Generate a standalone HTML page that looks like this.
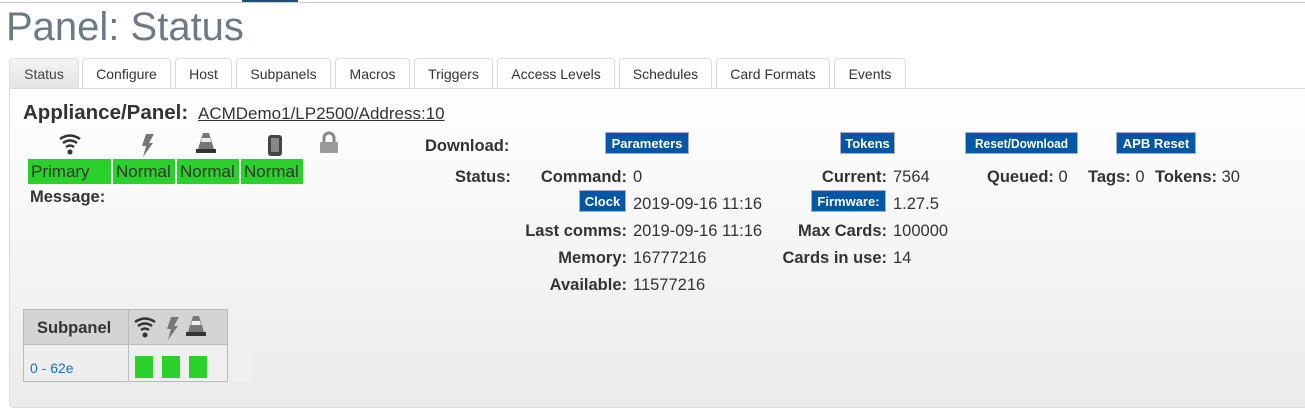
<!DOCTYPE html>
<html><head><style>
body{margin:0;width:1305px;height:410px;background:#fff;font-family:"Liberation Sans",Arial,sans-serif;color:#333;position:relative;overflow:hidden}
.a{position:absolute;white-space:nowrap}
.tab{position:absolute;top:58px;height:30px;border:1px solid #ddd;border-bottom:none;border-radius:4px 4px 0 0;background:#fff;font-size:14px;line-height:30px;text-align:center;box-sizing:border-box}
.panel{position:absolute;left:9px;top:88px;width:1300px;height:320px;border:1px solid #ddd;border-radius:0 0 0 4px;background:linear-gradient(#fff,#ebebeb);box-sizing:border-box}
.b{font-weight:bold;font-size:16.5px}
.v{font-size:16.5px}
.btn{position:absolute;background:#0357a5;color:#fff;font-weight:bold;font-size:13px;text-align:center;line-height:22px;height:22px;border:1px solid #aac;box-sizing:border-box;overflow:hidden;white-space:nowrap}
.g{position:absolute;background:#2ad12a;top:159px;height:25px;font-size:17px;line-height:25px;color:#333;padding-left:3px;box-sizing:border-box}
.sq{position:absolute;background:#2ad12a;width:18px;height:22px;top:356px}
</style></head><body>
<div class="a" style="left:0;top:2px;width:1305px;height:1px;background:#ccc"></div>
<div class="a" style="left:242px;top:0;width:56px;height:2px;background:#1f4e79"></div>
<div class="a" style="left:6px;top:5px;font-size:40px;color:#6c7a86">Panel: Status</div>
<div class="panel"></div>
<div class="tab" style="left:9px;width:70px;background:linear-gradient(#f4f4f4,#e4e4e4);color:#444">Status</div>
<div class="tab" style="left:82px;width:89px">Configure</div>
<div class="tab" style="left:175px;width:57px">Host</div>
<div class="tab" style="left:236px;width:95px">Subpanels</div>
<div class="tab" style="left:335px;width:75px">Macros</div>
<div class="tab" style="left:414px;width:79px">Triggers</div>
<div class="tab" style="left:497px;width:118px">Access Levels</div>
<div class="tab" style="left:619px;width:93px">Schedules</div>
<div class="tab" style="left:716px;width:114px">Card Formats</div>
<div class="tab" style="left:834px;width:72px">Events</div>

<div class="a" style="left:23px;top:101px;font-size:20.5px;font-weight:bold">Appliance/Panel:</div>
<div class="a" style="left:198px;top:104px;font-size:17px;text-decoration:underline">ACMDemo1/LP2500/Address:10</div>

<svg class="a" style="left:58px;top:133px" width="24" height="24" viewBox="0 0 24 24"><path d="M2 6Q12 -1 22 6" stroke="#333" stroke-width="2.5" fill="none"/><path d="M5 10Q12 5 19 10" stroke="#333" stroke-width="2.5" fill="none"/><path d="M8 14Q12 11 16 14" stroke="#333" stroke-width="2.5" fill="none"/><circle cx="12" cy="19" r="2.5" fill="#333"/></svg>
<svg class="a" style="left:138px;top:134px" width="18" height="24"><path d="M8 0H16L11 9H15L5 23L8 12H4Z" fill="#777"/></svg>
<svg class="a" style="left:195px;top:131px" width="22" height="24"><path d="M8 2H14L19 18H3Z" fill="#777"/><path d="M7 7H15L16 11H6Z" fill="#eee"/><rect x="1" y="18" width="20" height="4" fill="#333"/></svg>
<svg class="a" style="left:267px;top:134px" width="16" height="23"><rect x="1" y="1" width="14" height="21" rx="3" fill="#444"/><rect x="4" y="4" width="8" height="14" fill="#888"/></svg>
<svg class="a" style="left:319px;top:131px" width="20" height="24"><path d="M5 11V7A5 5 0 0 1 15 7V11" stroke="#888" stroke-width="3" fill="none"/><rect x="1" y="11" width="18" height="11" rx="1" fill="#999"/></svg>
<div class="g" style="left:28px;width:83px">Primary</div>
<div class="g" style="left:113px;width:62px">Normal</div>
<div class="g" style="left:177px;width:62px">Normal</div>
<div class="g" style="left:241px;width:62px">Normal</div>
<div class="a b" style="left:30px;top:188px">Message:</div>

<div class="a b" style="left:425px;top:137px">Download:</div>
<div class="btn" style="left:605px;top:132px;width:84px">Parameters</div>
<div class="btn" style="left:840px;top:132px;width:55px">Tokens</div>
<div class="btn" style="left:965px;top:132px;width:113px"><span style="display:inline-block;transform:scaleX(0.92)">Reset/Download</span></div>
<div class="btn" style="left:1116px;top:132px;width:80px">APB Reset</div>

<div class="a b" style="left:455px;top:168px">Status:</div>
<div class="a b" style="right:678px;top:168px">Command:</div>
<div class="a v" style="left:633px;top:168px">0</div>
<div class="btn" style="left:579px;top:190px;width:47px">Clock</div>
<div class="a v" style="left:633px;top:195px">2019-09-16 11:16</div>
<div class="a b" style="right:678px;top:222px">Last comms:</div>
<div class="a v" style="left:633px;top:222px">2019-09-16 11:16</div>
<div class="a b" style="right:678px;top:249px">Memory:</div>
<div class="a v" style="left:633px;top:249px">16777216</div>
<div class="a b" style="right:678px;top:276px">Available:</div>
<div class="a v" style="left:633px;top:276px">11577216</div>

<div class="a b" style="right:418px;top:168px">Current:</div>
<div class="a v" style="left:893px;top:168px">7564</div>
<div class="btn" style="left:811px;top:190px;width:75px">Firmware:</div>
<div class="a v" style="left:893px;top:195px">1.27.5</div>
<div class="a b" style="right:418px;top:222px">Max Cards:</div>
<div class="a v" style="left:893px;top:222px">100000</div>
<div class="a b" style="right:418px;top:249px">Cards in use:</div>
<div class="a v" style="left:893px;top:249px">14</div>

<div class="a v" style="left:987px;top:168px"><b>Queued:</b> 0</div>
<div class="a v" style="left:1088px;top:168px"><b>Tags:</b> 0</div>
<div class="a v" style="left:1155px;top:168px"><b>Tokens:</b> 30</div>

<div class="a" style="left:128px;top:345px;width:125px;height:36px;background:#efefef"></div>
<div class="a" style="left:23px;top:309px;width:205px;height:73px;border:1px solid #bbb;box-sizing:border-box"></div>
<div class="a" style="left:24px;top:310px;width:203px;height:34px;background:#d4d4d4"></div>
<div class="a" style="left:24px;top:344px;width:203px;height:1px;background:#bbb"></div>
<div class="a" style="left:128px;top:310px;width:1px;height:71px;background:#bbb"></div>
<div class="a b" style="left:37px;top:319px">Subpanel</div>
<svg class="a" style="left:133px;top:316px" width="24" height="24" viewBox="0 0 24 24"><path d="M2 6Q12 -1 22 6" stroke="#333" stroke-width="2.5" fill="none"/><path d="M5 10Q12 5 19 10" stroke="#333" stroke-width="2.5" fill="none"/><path d="M8 14Q12 11 16 14" stroke="#333" stroke-width="2.5" fill="none"/><circle cx="12" cy="19" r="2.5" fill="#333"/></svg>
<svg class="a" style="left:163px;top:317px" width="18" height="24"><path d="M8 0H16L11 9H15L5 23L8 12H4Z" fill="#777"/></svg>
<svg class="a" style="left:185px;top:314px" width="22" height="24"><path d="M8 2H14L19 18H3Z" fill="#777"/><path d="M7 7H15L16 11H6Z" fill="#eee"/><rect x="1" y="18" width="20" height="4" fill="#333"/></svg>
<div class="a" style="left:30px;top:360px;font-size:14px;color:#1a6fb5">0 - 62e</div>
<div class="sq" style="left:135px"></div><div class="sq" style="left:162px"></div><div class="sq" style="left:189px"></div>
</body></html>
